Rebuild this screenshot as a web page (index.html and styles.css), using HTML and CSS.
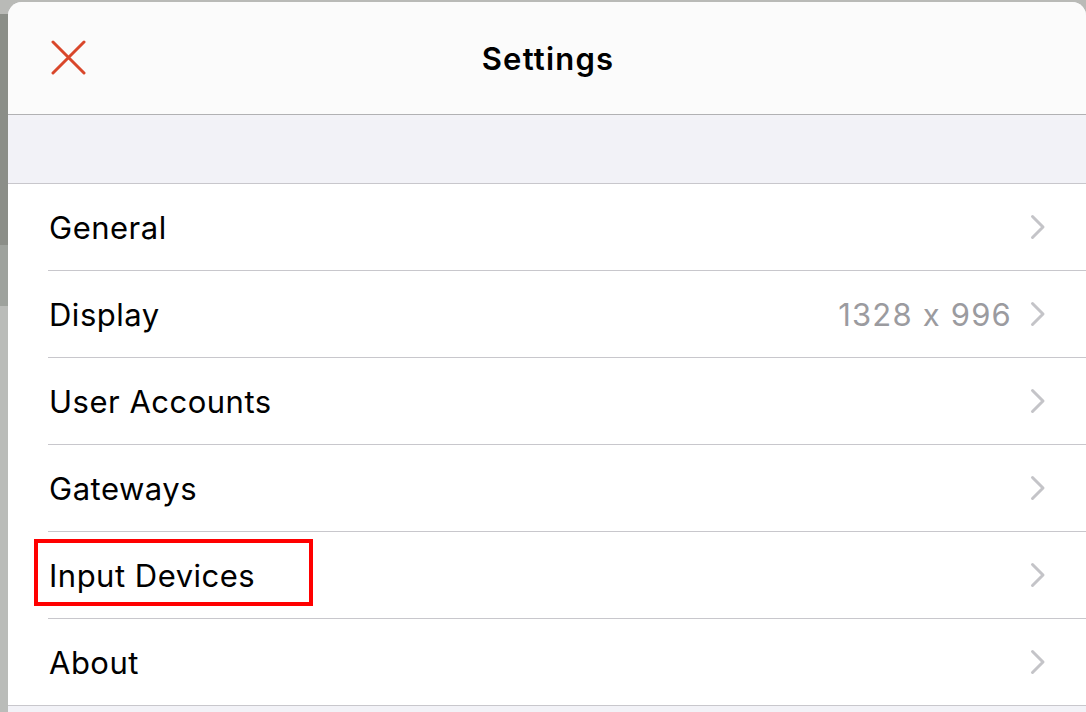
FILE: index.html
```html
<!DOCTYPE html>
<html>
<head>
<meta charset="utf-8">
<link rel="stylesheet" href="styles.css">
</head>
<body>
<div class="panel">
  <header class="navbar">
    <button class="close" aria-label="Close">
      <svg width="35" height="35" viewBox="0 0 35 35"><path d="M2 2 L33 33 M33 2 L2 33" stroke="#d9472b" stroke-width="3" stroke-linecap="round" fill="none"/></svg>
    </button>
    <h1 class="title">Settings</h1>
  </header>
  <div class="band"></div>
  <ul class="list">
    <li class="row"><span class="label">General</span><span class="chev"><svg width="16" height="26" viewBox="0 0 16 26"><path d="M2.5 2.5 L13 13 L2.5 23.5" stroke="#c4c4c8" stroke-width="3" stroke-linecap="round" stroke-linejoin="round" fill="none"/></svg></span></li>
    <li class="row"><span class="label">Display</span><span class="value">1328 x 996</span><span class="chev"><svg width="16" height="26" viewBox="0 0 16 26"><path d="M2.5 2.5 L13 13 L2.5 23.5" stroke="#c4c4c8" stroke-width="3" stroke-linecap="round" stroke-linejoin="round" fill="none"/></svg></span></li>
    <li class="row"><span class="label">User Accounts</span><span class="chev"><svg width="16" height="26" viewBox="0 0 16 26"><path d="M2.5 2.5 L13 13 L2.5 23.5" stroke="#c4c4c8" stroke-width="3" stroke-linecap="round" stroke-linejoin="round" fill="none"/></svg></span></li>
    <li class="row"><span class="label">Gateways</span><span class="chev"><svg width="16" height="26" viewBox="0 0 16 26"><path d="M2.5 2.5 L13 13 L2.5 23.5" stroke="#c4c4c8" stroke-width="3" stroke-linecap="round" stroke-linejoin="round" fill="none"/></svg></span></li>
    <li class="row"><span class="label highlight">Input Devices</span><span class="chev"><svg width="16" height="26" viewBox="0 0 16 26"><path d="M2.5 2.5 L13 13 L2.5 23.5" stroke="#c4c4c8" stroke-width="3" stroke-linecap="round" stroke-linejoin="round" fill="none"/></svg></span></li>
    <li class="row last"><span class="label">About</span><span class="chev"><svg width="16" height="26" viewBox="0 0 16 26"><path d="M2.5 2.5 L13 13 L2.5 23.5" stroke="#c4c4c8" stroke-width="3" stroke-linecap="round" stroke-linejoin="round" fill="none"/></svg></span></li>
  </ul>
</div>
</body>
</html>
```

FILE: styles.css
```css
html, body {
  margin: 0;
  padding: 0;
  height: 712px;
  overflow: hidden;
}
body {
  font-family: Inter, "Liberation Sans", sans-serif;
  font-feature-settings: "calt" 0;
  background: linear-gradient(to bottom,
    #b9bab7 0, #b9bab7 14px,
    #8b8e88 14px, #8b8e88 245px,
    #9ea29d 245px, #9ea29d 306px,
    #babcb9 306px, #babcb9 100%);
}
.panel {
  margin: 2px 0 0 8px;
  height: 710px;
  background: #f2f2f7;
  border-radius: 14px 14px 0 0;
  overflow: hidden;
  display: flex;
  flex-direction: column;
}
.navbar {
  height: 112px;
  flex: none;
  background: #fbfbfb;
  border-bottom: 1px solid #b1b1b3;
  display: flex;
  align-items: center;
  justify-content: center;
  position: relative;
}
.close {
  position: absolute;
  left: 43px;
  top: 38px;
  padding: 0;
  border: 0;
  background: none;
  width: 35px;
  height: 35px;
}
.close svg { display: block; }
.title {
  margin: 0 0 0 2px;
  font-size: 31px;
  font-weight: 600;
  color: #000;
  letter-spacing: 1.2px;
}
.band {
  height: 68px;
  flex: none;
  background: #f2f2f7;
  border-bottom: 1px solid #c8c7cc;
}
.list {
  list-style: none;
  margin: 0;
  padding: 0 0 0 40px;
  background: #fff;
  border-bottom: 1px solid #c8c7cc;
}
.row {
  height: 86px;
  display: flex;
  align-items: center;
  border-bottom: 1px solid #c8c7cc;
  padding-right: 40px;
  font-size: 31px;
  letter-spacing: 0.5px;
  color: #000;
}
.row.last { border-bottom: 0; }
.label {
  flex: 1;
  padding-left: 1px;
  line-height: 37px;
}
.highlight {
  flex: none;
  margin-left: -14px;
  margin-right: auto;
  margin-bottom: 6px;
  padding: 14px 54px 8px 11px;
  border: 4px solid #ff0000;
}
.value {
  color: #9b9b9f;
  margin-right: 18px;
  letter-spacing: 1.2px;
}
.chev {
  display: flex;
  width: 16px;
  height: 26px;
}
```
